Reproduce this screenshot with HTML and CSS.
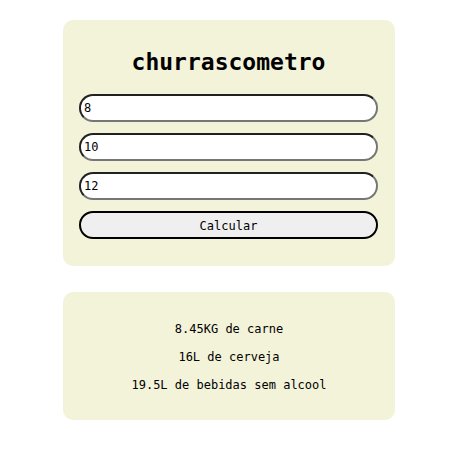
FILE: index.html
```html
<!DOCTYPE html>
<html lang="pt-br">
<head>
    <meta charset="utf-8">
    <title>Churrascometro</title>
    <link rel="stylesheet" href="styles.css">
</head>
<body>
    <div class="container">
        <div class="box">
            <h1 class="titulo">churrascometro</h1>
            <input class="campo" type="text" id="adultos" value="8">
            <input class="campo" type="text" id="criancas" value="10">
            <input class="campo" type="text" id="duracao" value="12">
            <button class="botao" id="calcular">Calcular</button>
        </div>

        <div class="box resultado" id="resultado">
            <p>8.45KG de carne</p>
            <p>16L de cerveja</p>
            <p>19.5L de bebidas sem alcool</p>
        </div>
    </div>
</body>
</html>
```

FILE: styles.css
```css
body {
	margin: 0;
	font-family: "DejaVu Sans Mono", monospace;
	font-size: 12px;
}
.container {
	width: 332px;
	margin-left: 63px;
	padding-top: 20px;
	display: flex;
	flex-direction: column;
	gap: 26px;
}
.box {
	background-color: #f3f3da;
	border-radius: 10px;
	padding: 29px 17px 27px 16px;
	display: flex;
	flex-direction: column;
	gap: 11px;
}
.titulo {
	font-size: 23px;
	text-align: center;
	margin: 0 0 7px 0;
	line-height: 27px;
}
.campo {
	height: 28px;
	box-sizing: border-box;
	border: 2px inset #767676;
	border-radius: 14px;
	padding: 0 3px;
	font-family: "DejaVu Sans Mono", monospace;
	font-size: 12px;
	background: #fff;
	outline: none;
}
.botao {
	height: 28px;
	box-sizing: border-box;
	border: 2px solid #000;
	border-radius: 14px;
	background: #efefef;
	padding-top: 2px;
	font-family: "DejaVu Sans Mono", monospace;
	font-size: 12px;
}
.resultado {
	padding: 30px 16px 28px;
	gap: 14px;
	align-items: center;
}
.resultado p {
	margin: 0;
	line-height: 14px;
}
```
